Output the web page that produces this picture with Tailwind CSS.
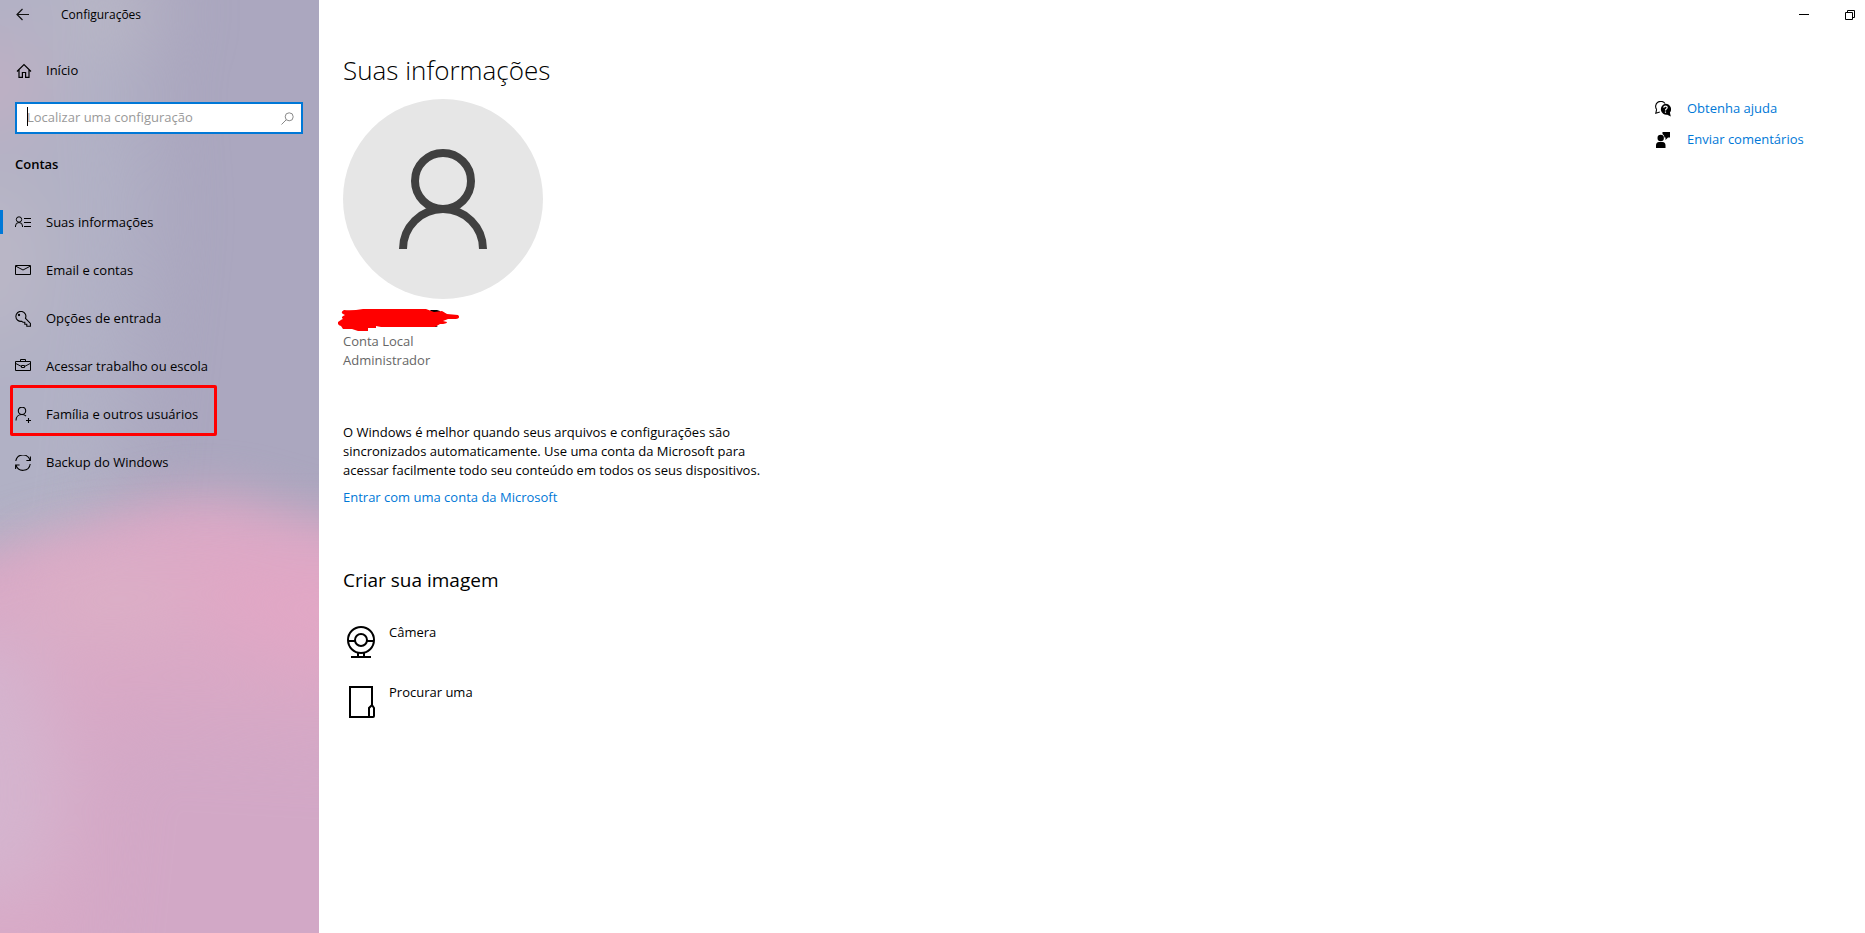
<!DOCTYPE html>
<html lang="pt-BR">
<head>
<meta charset="utf-8">
<title>Configurações</title>
<script src="https://cdn.jsdelivr.net/npm/@tailwindcss/browser@4"></script>
</head>
<body class="flex min-h-screen bg-white font-['Open_Sans','Noto_Sans',sans-serif] text-[13px] text-black">

<aside class="relative isolate w-[319px] shrink-0 overflow-hidden bg-[#aca8c0]">
  <svg class="absolute inset-0 -z-10 size-full" viewBox="0 0 319 933" preserveAspectRatio="none" aria-hidden="true">
    <defs>
      <filter id="soft" filterUnits="userSpaceOnUse" x="-200" y="-200" width="720" height="1330" color-interpolation-filters="sRGB"><feGaussianBlur stdDeviation="36"/></filter>
      <filter id="edge" filterUnits="userSpaceOnUse" x="-200" y="-200" width="720" height="1330" color-interpolation-filters="sRGB"><feGaussianBlur stdDeviation="24"/></filter>
    </defs>
    <rect width="319" height="933" fill="#aba7bf"/>
    <g filter="url(#soft)">
      <path d="M-160 -160H120L150 220L110 600H-160Z" fill="#b1b1c5"/>
      <ellipse cx="110" cy="10" rx="50" ry="40" fill="#bab8c6"/>
      <ellipse cx="-10" cy="85" rx="50" ry="46" fill="#c4afc3"/>
      <ellipse cx="-10" cy="260" rx="50" ry="80" fill="#bcb8c6"/>
    </g>
    <path d="M-180 600Q0 545 80 525Q180 485 240 498Q320 520 500 570V1130H-180Z" fill="#d9a9c6" filter="url(#edge)"/>
    <g filter="url(#soft)">
      <ellipse cx="110" cy="600" rx="90" ry="36" fill="#dcb0c6"/>
      <path d="M150 560L460 560V690L250 650Z" fill="#e2a7c5"/>
      <path d="M-160 640H30L70 790L40 900H-160Z" fill="#d4b4ce"/>
      <path d="M100 720L460 740V1110H60Z" fill="#d2a8c6"/>
    </g>
  </svg>

  <header class="flex h-[30px] items-center">
    <button type="button" aria-label="Voltar" class="flex h-[30px] w-[46px] items-center justify-center">
      <svg class="size-4" viewBox="0 0 16 16" fill="none" stroke="#111" stroke-width="1.2"><path d="M14 7.500H2.500M7.500 2L2 7.500 7.500 13"/></svg>
    </button>
    <span class="pl-[15px] text-xs">Configurações</span>
  </header>

  <a href="#inicio" class="mt-[17px] flex h-12 items-center gap-[14px] pl-4">
    <svg class="size-4" viewBox="0 0 16 16" fill="none" stroke="#000" stroke-width="1.2"><path d="M1 8.500L8 1.500l7 7M3 7v7.400h3.400V9.500h3.200v4.900H13V7"/></svg>
    <span>Início</span>
  </a>

  <label class="relative mt-[7px] mr-4 ml-[15px] flex h-8 items-center border-2 border-[#0078d7] bg-white">
    <input type="search" aria-label="Localizar uma configuração" placeholder="Localizar uma configuração" class="h-full w-full pb-[2px] pl-[10px] outline-none placeholder:text-[#999]">
    <span class="absolute top-[3px] left-[10px] h-[19px] w-px bg-black"></span>
    <svg class="absolute top-2 right-[7px] size-[13px]" viewBox="0 0 13 13" fill="none" stroke="#888" stroke-width="1"><circle cx="8.200" cy="4.800" r="4"/><path d="M5.300 7.700L.5 12.500"/></svg>
  </label>

  <h2 class="mt-[19px] pl-[15px] leading-[22px] font-semibold">Contas</h2>

  <nav class="mt-6">
    <a href="#info" class="relative flex h-12 items-center gap-[15px] pl-[15px]">
      <span class="absolute top-[11px] left-0 h-6 w-[3px] bg-[#0078d7]"></span>
      <svg class="size-4" viewBox="0 0 16 16" fill="none" stroke="#000"><circle cx="4" cy="4.500" r="2.700"/><path d="M.5 12V11a3.500 3.500 0 0 1 7 0v1M9 3.500h7M9 7.500h7M9 11.500h7"/></svg>
      <span>Suas informações</span>
    </a>
    <a href="#email" class="flex h-12 items-center gap-[15px] pl-[15px]">
      <svg class="size-4" viewBox="0 0 16 16" fill="none" stroke="#000"><path d="M.5 2.500h15v9H.5zM1 3.300l7 3.700 7-3.700"/></svg>
      <span>Email e contas</span>
    </a>
    <a href="#entrada" class="flex h-12 items-center gap-[15px] pl-[15px]">
      <svg class="size-4" viewBox="0 0 16 16" fill="none" stroke="#000" stroke-width="1.100"><path d="M10.500 7.300A5 5 0 1 0 6.800 10.300L8 11.300h1.800v1.900h2v2h3.600v-2.800z"/><circle cx="4" cy="4" r=".6" fill="#000"/></svg>
      <span>Opções de entrada</span>
    </a>
    <a href="#trabalho" class="flex h-12 items-center gap-[15px] pl-[15px]">
      <svg class="size-4" viewBox="0 0 16 16" fill="none" stroke="#000"><path d="M.5 2.500h15v9H.5zM5.500 2.500v-2h5v2M.8 4.500L6.500 7.500M9.500 7.500l5.700-3M6.500 6.500h3v2h-3z"/></svg>
      <span>Acessar trabalho ou escola</span>
    </a>
    <a href="#familia" class="relative flex h-12 items-center gap-[15px] pl-[15px]">
      <span class="absolute -top-[6px] left-[10px] h-[51px] w-[207px] rounded-xs border-3 border-[#f00]"></span>
      <svg class="size-4" viewBox="0 0 16 16" fill="none" stroke="#000" stroke-width="1.100"><circle cx="7" cy="3.800" r="3.700"/><path d="M1 13.500C1 10 3.500 7.500 7 7.500c1.700 0 3 .6 4 1.500M13.500 11v5M11 13.500h5"/></svg>
      <span>Família e outros usuários</span>
    </a>
    <a href="#backup" class="flex h-12 items-center gap-[15px] pl-[15px]">
      <svg class="size-4" viewBox="0 0 16 16" fill="none" stroke="#000" stroke-width="1.100"><path d="M.8 6A7.300 7.300 0 0 1 15 5.300M15.400 1.500v4h-4M15.200 9A7.300 7.300 0 0 1 1 10.200M.6 14v-4h4"/></svg>
      <span>Backup do Windows</span>
    </a>
  </nav>
</aside>

<div class="flex min-w-0 flex-1 flex-col">
  <div class="flex h-[30px] justify-end">
    <button type="button" aria-label="Minimizar" class="flex w-[46px] items-center justify-center">
      <svg class="size-[10px]" viewBox="0 0 10 10"><path d="M0 4h10v1H0z"/></svg>
    </button>
    <button type="button" aria-label="Restaurar" class="flex w-[38px] items-center pl-[18px]">
      <svg class="size-[10px]" viewBox="0 0 10 10" fill="none" stroke="#000"><path d="M.5 2.500h7v7h-7zM2.500 2.500v-2h7v7h-2"/></svg>
    </button>
  </div>

  <div class="flex justify-between pl-6">
    <main class="w-[440px]">
      <h1 class="mt-5 text-[26px] leading-10 font-light">Suas informações</h1>
      <svg class="mt-[9px] size-[200px]" viewBox="0 0 200 200" fill="none" role="img" aria-label="Imagem da conta">
        <circle cx="100" cy="100" r="100" fill="#e6e6e6"/>
        <g stroke="#404040" stroke-width="8"><circle cx="100" cy="82" r="28"/><path d="M60 150a40 40 0 0 1 80 0"/></g>
      </svg>
      <svg class="-ml-[5px] mt-[10px] h-[22px] w-[121px]" viewBox="0 0 121 22" aria-hidden="true">
        <path d="M92 1h7l3 1v2h-8zM95 17h5l-2 1h-4z"/>
        <path fill="#f00" d="M6 1Q14 2 25 0H88L96 3L104 2L109 5L120 6Q123 9 118 10L110 10L105 12L109 13Q109 15 102 15L97 18H43L38 17V19H30V22H20L14 20L5 20L3 17Q-1 16 0 13Q4 10 5 10Q2 8 7 6Q1 4 6 1Z"/>
      </svg>
      <p class="mt-[1px] leading-[19px] text-[#666]">Conta Local<br>Administrador</p>
      <p class="mt-[53px] leading-[19px]">O Windows é melhor quando seus arquivos e configurações são sincronizados automaticamente. Use uma conta da Microsoft para acessar facilmente todo seu conteúdo em todos os seus dispositivos.</p>
      <a href="#entrar" class="mt-[7px] block leading-5 text-[#0078d7]">Entrar com uma conta da Microsoft</a>

      <h2 class="mt-[59px] text-[19px] leading-7">Criar sua imagem</h2>
      <button type="button" class="mt-7 flex w-full items-start gap-3 pl-1 text-left">
        <svg class="mt-1 h-8 w-[30px]" viewBox="0 0 30 32" fill="none" stroke="#000" stroke-width="2"><circle cx="14" cy="14" r="13"/><circle cx="14" cy="14" r="6"/><path d="M1 15h7M20 15h7M4 31h20M11 26.500V31M17 26.500V31"/></svg>
        <span class="leading-5">Câmera</span>
      </button>
      <button type="button" class="mt-6 flex w-full items-start gap-3 pl-1 text-left">
        <svg class="mt-1 h-8 w-[30px]" viewBox="0 0 30 32" fill="none" stroke="#000" stroke-width="2"><path d="M25 19V1H3v30h23q1 0 1-1V22l-2-3-3 3V31"/></svg>
        <span class="leading-5">Procurar uma</span>
      </button>
    </main>

    <aside class="w-[210px] pt-[69px] text-[#0078d7]">
      <a href="#ajuda" class="flex h-5 items-center gap-4">
        <svg class="size-4" viewBox="0 0 16 16"><path d="M1.600 8.500A5 5 0 1 1 10 2.500M1.600 8.500L.8 12.300 4.800 11" fill="none" stroke="#000" stroke-width="1.100"/><path d="M10.500 2.800a5.500 5.500 0 0 1 4.400 8.800l.9 3.900-3.500-1.800A5.500 5.500 0 1 1 10.500 2.800z"/><path d="M8.800 6.800q0-1.700 1.700-1.700t1.700 1.500q0 .9-.9 1.400-.8.500-.8 1.400M10.500 10.400v1.400" fill="none" stroke="#fff" stroke-width="1.200"/></svg>
        <span>Obtenha ajuda</span>
      </a>
      <a href="#comentarios" class="mt-[11px] flex h-5 items-center gap-4">
        <svg class="size-4" viewBox="0 0 16 16"><circle cx="5.700" cy="6" r="3.200"/><path d="M1 16v-2.500Q1 10 4 10h3.500q3 0 3 3.500V16zM7.500 0H15v5.500h-2L10.500 8V5.500H9.500Q9.500 3 7.500 2z"/></svg>
        <span>Enviar comentários</span>
      </a>
    </aside>
  </div>
</div>
</body>
</html>
